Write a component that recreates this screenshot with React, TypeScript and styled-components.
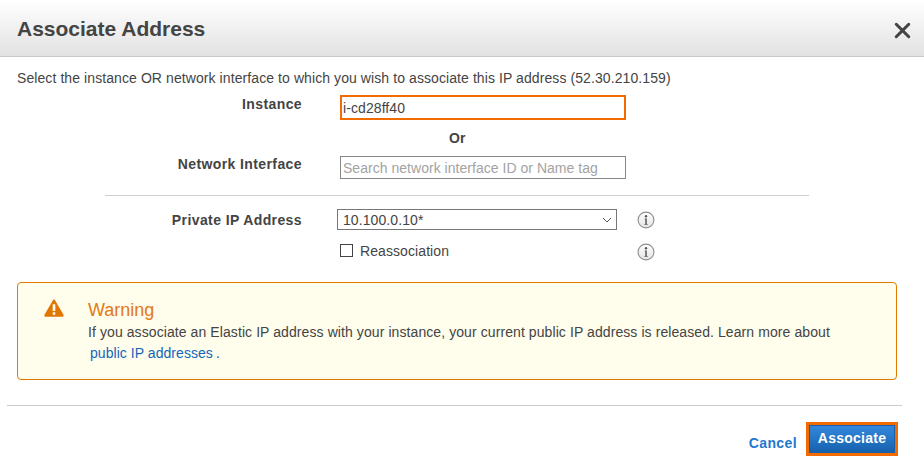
import { X } from "lucide-react";
import styled, { createGlobalStyle } from "styled-components";

const GlobalStyle = createGlobalStyle`
  html, body {
    margin: 0;
    padding: 0;
    background: #fff;
  }
  * {
    box-sizing: border-box;
  }
`;

function InfoIcon() {
  return (
    <InfoSlot>
      <svg width="18" height="18" viewBox="0 0 18 18">
        <defs>
          <linearGradient id="infoFill" x1="0" y1="0" x2="0" y2="1">
            <stop offset="0" stopColor="#ffffff" />
            <stop offset="1" stopColor="#e4e4e4" />
          </linearGradient>
        </defs>
        <circle cx="9" cy="9" r="7.9" fill="url(#infoFill)" stroke="#8f8f8f" strokeWidth="1.1" />
        <circle cx="9" cy="5.2" r="1.2" fill="#555" />
        <path d="M7.6 7.5h2.2v5.4h0.9v0.8H7.4v-0.8h0.9V8.3h-0.7z" fill="#555" />
      </svg>
    </InfoSlot>
  );
}

function WarningIcon() {
  return (
    <svg width="20" height="18" viewBox="0 0 20 18">
      <path
        d="M10 0.6c.5 0 .9.3 1.2.8l8.3 14.4c.5.9 0 1.9-1.1 1.9H1.6C.5 17.7 0 16.7.5 15.8L8.8 1.4c.3-.5.7-.8 1.2-.8z"
        fill="#e07700"
      />
      <rect x="8.7" y="5.2" width="2.6" height="6.8" rx="0.5" fill="#fff" />
      <rect x="8.7" y="13.2" width="2.6" height="2.6" rx="0.5" fill="#fff" />
    </svg>
  );
}

function App() {
  return (
    <>
      <GlobalStyle />
      <Modal>
        <Header>
          <Title>Associate Address</Title>
          <CloseButton>
            <X size={25} strokeWidth={2.9} color="#444" />
          </CloseButton>
        </Header>

        <Intro>
          Select the instance OR network interface to which you wish to
          associate this IP address (52.30.210.159)
        </Intro>

        <FieldRow>
          <Label>Instance</Label>
          <TextBox $active>i-cd28ff40</TextBox>
        </FieldRow>
        <OrText>Or</OrText>
        <FieldRow $top={10}>
          <Label $raised>Network Interface</Label>
          <TextBox $placeholder>Search network interface ID or Name tag</TextBox>
        </FieldRow>

        <Divider />

        <IpRow>
          <Label>Private IP Address</Label>
          <SelectBox>
            10.100.0.10*
            <svg width="10" height="6" viewBox="0 0 10 6">
              <path d="M1 1l4 4 4-4" fill="none" stroke="#555" strokeWidth="1" />
            </svg>
          </SelectBox>
          <InfoIcon />
        </IpRow>
        <CheckRow>
          <CheckLabel>
            <CheckBox />
            Reassociation
          </CheckLabel>
          <InfoIcon />
        </CheckRow>

        <WarningBox>
          <WarningIconSlot>
            <WarningIcon />
          </WarningIconSlot>
          <div>
            <WarningTitle>Warning</WarningTitle>
            <WarningText>
              If you associate an Elastic IP address with your instance, your
              current public IP address is released. Learn more about
            </WarningText>
            <WarningText $second>
              <Link>public IP addresses</Link>.
            </WarningText>
          </div>
        </WarningBox>

        <FooterLine />
        <Footer>
          <CancelLink>Cancel</CancelLink>
          <AssociateButton>Associate</AssociateButton>
        </Footer>
      </Modal>
    </>
  );
}
export default App;

const Modal = styled.div`
  width: 924px;
  height: 464px;
  overflow: hidden;
  background: #fff;
  color: #444;
  font-family: "Liberation Sans", Arial, sans-serif;
  font-size: 14px;
  letter-spacing: 0.085px;
`;

const Header = styled.div`
  height: 57px;
  padding: 2px 9px 0 17px;
  display: flex;
  align-items: center;
  justify-content: space-between;
  background: linear-gradient(to bottom, #ffffff, #e2e2e2);
  border-bottom: 1px solid #c8c8c8;
`;

const Title = styled.h1`
  margin: 0;
  font-size: 21px;
  font-weight: 700;
  letter-spacing: 0;
  color: #444;
`;

const CloseButton = styled.div`
  display: flex;
  margin-top: 2px;
`;

const Intro = styled.p`
  margin: 0;
  padding: 13px 0 0 17px;
  height: 38px;
  line-height: 16px;
  font-size: 14px;
`;

const FieldRow = styled.div<{ $top?: number }>`
  display: grid;
  grid-template-columns: 302px 286px;
  column-gap: 38px;
  margin-top: ${(props) => props.$top ?? 0}px;
`;

const Label = styled.div<{ $raised?: boolean }>`
  flex: 0 0 302px;
  text-align: right;
  font-size: 14px;
  font-weight: 700;
  line-height: 16px;
  padding-top: ${(props) => (props.$raised ? "0" : "1px")};
  color: #444;
  letter-spacing: 0.4px;
`;

const TextBox = styled.div<{ $active?: boolean; $placeholder?: boolean }>`
  height: ${(props) => (props.$active ? "25px" : "23px")};
  border: ${(props) => (props.$active ? "2px solid #f26b00" : "1px solid #888")};
  padding-left: ${(props) => (props.$active ? "1px" : "2px")};
  line-height: ${(props) => (props.$active ? "22px" : "23px")};
  font-size: 14px;
  letter-spacing: ${(props) => (props.$placeholder ? "0.03px" : "0.085px")};
  color: ${(props) => (props.$placeholder ? "#a3a3a3" : "#444")};
  white-space: nowrap;
`;

const OrText = styled.div`
  margin-top: 10px;
  padding-left: 449px;
  height: 16px;
  line-height: 16px;
  font-size: 14px;
  font-weight: 700;
`;

const Divider = styled.div`
  margin: 16px 115px 0 105px;
  height: 1px;
  background: #cfcfcf;
`;

const IpRow = styled.div`
  display: flex;
  align-items: center;
  margin-top: 13px;
`;

const SelectBox = styled.div`
  width: 280px;
  height: 21px;
  margin-left: 35px;
  border: 1px solid #777;
  padding: 0 4px 0 5px;
  display: flex;
  align-items: center;
  justify-content: space-between;
  font-size: 14px;
  color: #444;
`;

const InfoSlot = styled.div`
  display: flex;
  margin-left: 20px;
`;

const CheckRow = styled.div`
  display: flex;
  align-items: center;
  height: 18px;
  margin-top: 12px;
  padding-left: 340px;

  & > ${InfoSlot} {
    margin-top: 2px;
  }
`;

const CheckLabel = styled.div`
  width: 277px;
  display: flex;
  align-items: center;
  gap: 7px;
  font-size: 14px;
  line-height: 16px;
`;

const CheckBox = styled.span`
  display: block;
  width: 13px;
  height: 13px;
  margin-bottom: 2px;
  border: 1px solid #444;
  background: #fff;
`;

const WarningBox = styled.div`
  margin: 22px 27px 0 17px;
  height: 98px;
  border: 1px solid #e07b00;
  border-radius: 4px;
  background: #fffdec;
  display: flex;
  padding: 16px 0 0 26px;
`;

const WarningIconSlot = styled.div`
  width: 44px;
  display: flex;
  align-items: flex-start;
`;

const WarningTitle = styled.div`
  font-size: 18px;
  line-height: 22px;
  letter-spacing: 0;
  color: #e47911;
`;

const WarningText = styled.div<{ $second?: boolean }>`
  font-size: 14px;
  line-height: 21px;
  margin-top: ${(props) => (props.$second ? "0" : "1px")};
  padding-left: ${(props) => (props.$second ? "2px" : "0")};
  white-space: nowrap;
`;

const Link = styled.span`
  color: #1166bb;
  letter-spacing: 0.05px;
  margin-right: 3px;
`;

const FooterLine = styled.div`
  margin: 25px 22px 0 7px;
  height: 1px;
  background: #cccccc;
`;

const Footer = styled.div`
  display: flex;
  justify-content: flex-end;
  align-items: center;
  gap: 9px;
  padding: 16px 26px 0 0;
`;

const CancelLink = styled.span`
  font-size: 14px;
  font-weight: 700;
  color: #1f77cf;
  margin-top: 7px;
  letter-spacing: 0.4px;
`;

const AssociateButton = styled.div`
  width: 92px;
  height: 34px;
  border: 3px solid #f26b00;
  background: linear-gradient(to bottom, #338ade, #1560ad);
  box-shadow: inset 0 0 0 1px #1a5fa5;
  color: #fff;
  font-size: 14px;
  font-weight: 700;
  letter-spacing: 0.25px;
  text-align: center;
  line-height: 26px;
`;
